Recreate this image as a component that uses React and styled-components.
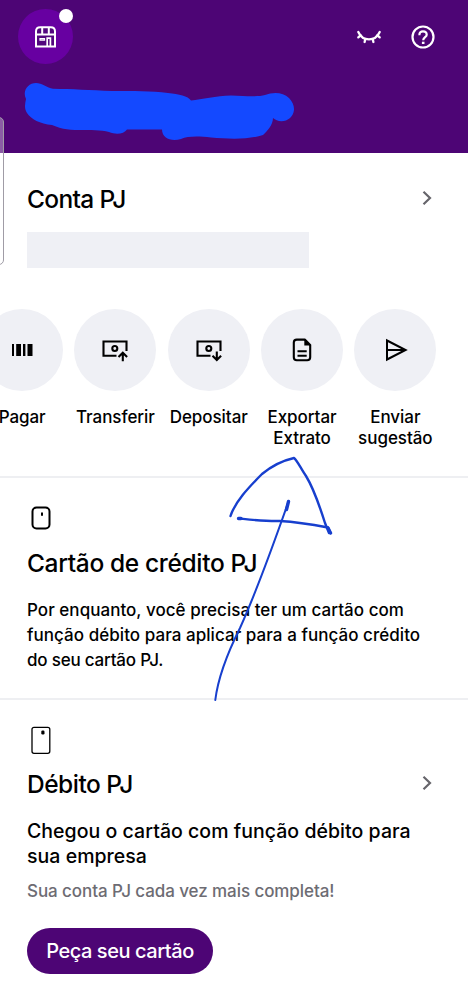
import React from 'react';
//STYLING
import styled, { createGlobalStyle } from 'styled-components';

const actions = [
  { id: 'pagar', lines: ['Pagar'], icon: BarcodeIcon },
  { id: 'transferir', lines: ['Transferir'], icon: TransferIcon },
  { id: 'depositar', lines: ['Depositar'], icon: DepositIcon },
  { id: 'extrato', lines: ['Exportar', 'Extrato'], icon: FileIcon },
  { id: 'sugestao', lines: ['Enviar', 'sugestão'], icon: SendIcon },
];

//ICONS
function StoreIcon() {
  return (
    <svg width="21" height="22" viewBox="0 0 21 22" fill="none" stroke="#fff" strokeWidth="2">
      <path d="M1 20.6V5.5Q1 1.2 5.3 1.2H15.7Q20 1.2 20 5.5V20.6Z" fill="#52067e" />
      <path d="M1 8.600H20M7.2 1.5V8.5M13.8 1.5V8.5" />
      <path d="M12.2 20.5V12.2H15.400V20.5" strokeWidth="1.7" />
      <path d="M5 12.600H9.500V14.200H5Z" strokeWidth="1.2" />
    </svg>
  );
}

function ClosedEyeIcon() {
  return (
    <svg width="26" height="14" viewBox="0 0 26 14" fill="none" stroke="#fff" strokeWidth="2.3" strokeLinecap="round">
      <path d="M2.3 2C4.5 6.8 8.2 9.4 13 9.4S21.5 6.8 23.7 2" />
      <path d="M4.6 5.3L2.3 7.4M21.4 5.3L23.7 7.4M9.3 9L8.6 12M16.7 9L17.4 12" />
    </svg>
  );
}

function HelpIcon() {
  return (
    <svg width="24" height="24" viewBox="0 0 24 24" fill="none" stroke="#fff" strokeWidth="2.2">
      <circle cx="12" cy="12" r="10.5" />
      <path d="M8.4 10.2C8.3 7.7 9.8 6.3 12 6.3S15.7 7.7 15.7 9.7C15.7 12.1 12.2 12.3 12.2 15.2" />
      <path d="M12.2 16.7V19" strokeWidth="2.6" />
    </svg>
  );
}

function ChevronIcon() {
  return (
    <svg width="10" height="16" viewBox="0 0 10 16" fill="none" stroke="#66656b" strokeWidth="2.2">
      <path d="M1.5 1.7L8 8L1.5 14.3" />
    </svg>
  );
}

function BarcodeIcon() {
  return (
    <svg width="22" height="12" viewBox="0 0 22 12" fill="#000">
      <path d="M1 0H3V12H1ZM5.2 0H10V12H5.2ZM12 0H14.4V12H12ZM16.5 0H21.5V12H16.5Z" />
    </svg>
  );
}

function TransferIcon() {
  return (
    <svg width="26" height="22" viewBox="0 -1 26 22" overflow="visible" fill="none" stroke="#000" strokeWidth="2.1">
      <path d="M14.5 15.7H1.5V1.5H24.5V11" />
      <circle cx="12.8" cy="8.5" r="2.5" />
      <path d="M20.8 21.3V13.5M16.5 17L20.8 12.7L25.1 17" />
    </svg>
  );
}

function DepositIcon() {
  return (
    <svg width="26" height="22" viewBox="0 -1 26 22" overflow="visible" fill="none" stroke="#000" strokeWidth="2.1">
      <path d="M14.5 15.7H1.5V1.5H24.5V11" />
      <circle cx="12.8" cy="8.5" r="2.5" />
      <path d="M20.8 11.5V20M16.5 15.8L20.8 20.1L25.1 15.8" />
    </svg>
  );
}

function FileIcon() {
  return (
    <svg width="20" height="24" viewBox="0 0 20 24" fill="none" stroke="#000" strokeWidth="2.1">
      <path d="M12.8 1.6H4.8Q1.8 1.6 1.8 4.6V19.2Q1.8 22.2 4.8 22.2H15.2Q18.2 22.2 18.2 19.2V7Z" strokeLinejoin="round" />
      <path d="M12.3 1.5V7.5H18.5Z" fill="#000" stroke="none" />
      <path d="M5.5 13.3H14.7M5.5 17.7H14.7" />
    </svg>
  );
}

function SendIcon() {
  return (
    <svg width="26" height="24" viewBox="0 0 26 24" fill="none" stroke="#000" strokeWidth="2">
      <path d="M5 2.5V21.5L23.6 12Z" />
      <path d="M5 12H23" />
    </svg>
  );
}

function CreditIcon() {
  return (
    <svg width="26" height="24" viewBox="0 0 26 24" fill="none" stroke="#000" strokeWidth="2">
      <rect x="5.5" y="1.5" width="17" height="21" rx="4" />
      <path d="M15 6.5V9.7" />
    </svg>
  );
}

function DebitIcon() {
  return (
    <svg width="26" height="28" viewBox="0 0 26 28" fill="none" stroke="#000" strokeWidth="1.3">
      <rect x="5" y="1.3" width="17.8" height="26" rx="2" />
      <rect x="14.3" y="4.5" width="3.2" height="4" rx="1.2" fill="#000" stroke="none" />
    </svg>
  );
}

//HAND DRAWN MARKS
function Marks() {
  return (
    <Drawing width="468" height="720" viewBox="0 0 468 720" fill="none">
      <path
        fill="#1449ff"
        d="M36 83C42 83 47 88 53 88.7C72 89 90 90 112 91C134 91 151 91 168 93C179 94 188 96 191 100.5C202 99 216 96 231 95.5C246 96 258 97 265 95C273 92 283 92 289 98C297 106 295 117 286 120.5C281 122 276 121 273 118C273 125 267 131 263 135C248 140 228 139 211 137.5C198 136 188 136 181 139C171 142 162 138 162 129.5H127C124 134 116 135 109 132C101 130 90 130 80 130C66 130 59 128 52 125C40 124 31 119 27 113C24 108 25 104 26 99C22 91 28 83 36 83Z"
      />
      <g stroke="#173fce" strokeLinecap="round" strokeLinejoin="round">
        <path strokeWidth="2.4" d="M230.5 516C235 502 248 488 262 474C273 465 285 460 294 458C297 460 301 469 306 476C314 489 319 504 325 523L329 533" />
        <path strokeWidth="2.4" d="M239 518.5C254 520 267 521.5 280 521C299 522 315 525 328 527.5L330.5 533" />
        <path strokeWidth="2" d="M288 503C275 540 258 588 240 628C229 650 218 678 215.3 700" />
        <path strokeWidth="3.4" d="M288.5 501.5L286.5 509.5M238.5 518.5H241M328 528L330.5 533" />
      </g>
    </Drawing>
  );
}

function App() {
  return (
    <Screen>
      <GlobalStyle />
      <Header>
        <Avatar>
          <StoreIcon />
          <Badge />
        </Avatar>
        <HeaderIcons>
          <ClosedEyeIcon />
          <HelpIcon />
        </HeaderIcons>
      </Header>

      <Account>
        <TitleRow>
          <Title $spacing="-0.65px">Conta PJ</Title>
          <ChevronIcon />
        </TitleRow>
        <HiddenBalance />
        <Actions>
          {actions.map(({ id, lines, icon: Icon }) => (
            <Action key={id}>
              <Circle><Icon /></Circle>
              <ActionLabel>
                {lines.map((line) => <span key={line}>{line}</span>)}
              </ActionLabel>
            </Action>
          ))}
        </Actions>
      </Account>

      <Credit>
        <CreditIcon />
        <TitleRow>
          <Title $spacing="-0.35px">Cartão de crédito PJ</Title>
        </TitleRow>
        <Text>
          <Line $spacing="0.04px">Por enquanto, você precisa ter um cartão com</Line>
          <Line $spacing="0.05px">função débito para aplicar para a função crédito</Line>
          <Line $spacing="-0.2px">do seu cartão PJ.</Line>
        </Text>
      </Credit>

      <Debit>
        <DebitIcon />
        <TitleRow>
          <Title $spacing="-0.5px">Débito PJ</Title>
          <ChevronIcon />
        </TitleRow>
        <Lead>
          Chegou o cartão com função débito para<br />
          sua empresa
        </Lead>
        <Note>Sua conta PJ cada vez mais completa!</Note>
        <Button>Peça seu cartão</Button>
      </Debit>

      <EdgeHandle />
      <Marks />
    </Screen>
  );
}

const GlobalStyle = createGlobalStyle`
  * {
    box-sizing: border-box;
  }
  body {
    margin: 0;
    background: #fff;
    font-family: Inter, "Liberation Sans", sans-serif;
  }
  svg {
    display: block;
    flex-shrink: 0;
  }
`

const Screen = styled.div`
  position: relative;
  width: 468px;
  height: 998px;
  overflow: hidden;
  color: #000;
`

const Header = styled.header`
  display: flex;
  justify-content: space-between;
  align-items: flex-start;
  height: 153px;
  padding: 9px 33px 0 18px;
  background: #4d0575;
`

const Avatar = styled.div`
  position: relative;
  display: flex;
  align-items: center;
  justify-content: center;
  width: 55px;
  height: 55px;
  border-radius: 50%;
  background: #6700a1;
`

const Badge = styled.span`
  position: absolute;
  top: 0;
  right: 0;
  width: 14px;
  height: 14px;
  border-radius: 50%;
  background: #fff;
`

const HeaderIcons = styled.div`
  display: flex;
  align-items: center;
  gap: 29px;
  height: 55px;
`

const TitleRow = styled.div`
  display: flex;
  align-items: center;
  justify-content: space-between;

  svg {
    margin-bottom: 3px;
  }
`

const Section = styled.section`
  border-bottom: 2px solid #eeeff2;
`

const Account = styled(Section)`
  height: 325px;
  padding: 30px 36px 0 27px;
`

const Credit = styled(Section)`
  height: 222px;
  padding: 28px 27px 0;

  ${TitleRow} {
    margin-top: 17px;
  }
`

const Debit = styled.section`
  padding: 26px 36px 0 27px;

  ${TitleRow} {
    margin-top: 14px;
  }
`

const Title = styled.h2`
  margin: 0;
  font-size: 24.5px;
  font-weight: 500;
  line-height: 32px;
  letter-spacing: ${({ $spacing }) => $spacing};
  white-space: nowrap;
`

const HiddenBalance = styled.div`
  width: 282px;
  height: 36px;
  margin-top: 17px;
  background: #eff0f5;
`

const Actions = styled.div`
  display: flex;
  width: 467px;
  margin: 41px 0 0 -51.5px;
`

const Action = styled.div`
  display: flex;
  flex: 0 0 93.3px;
  flex-direction: column;
  align-items: center;
`

const Circle = styled.div`
  display: flex;
  align-items: center;
  justify-content: center;
  width: 82px;
  height: 82px;
  border-radius: 50%;
  background: #eff0f5;
`

const ActionLabel = styled.div`
  display: flex;
  flex-direction: column;
  align-items: center;
  margin-top: 16px;
  font-size: 17px;
  font-weight: 500;
  line-height: 21px;
  letter-spacing: -0.05px;
`

const Text = styled.p`
  margin: 19px 0 0;
  font-size: 17px;
  font-weight: 500;
  line-height: 25px;
  white-space: nowrap;
`

const Line = styled.span`
  display: block;
  letter-spacing: ${({ $spacing }) => $spacing};
`

const Lead = styled.p`
  margin: 19px 0 0;
  font-size: 19.5px;
  font-weight: 500;
  line-height: 25px;
  letter-spacing: 0.04px;
  white-space: nowrap;
`

const Note = styled.p`
  margin: 11px 0 0;
  color: #6d6c73;
  font-size: 17px;
  font-weight: 500;
  line-height: 22px;
  letter-spacing: -0.08px;
`

const Button = styled.button`
  width: 186px;
  height: 46px;
  margin-top: 26px;
  padding: 0;
  border: 0;
  border-radius: 23px;
  background: #4d0575;
  color: #fff;
  font-family: inherit;
  font-size: 20px;
  font-weight: 500;
  letter-spacing: -0.45px;
`

const EdgeHandle = styled.div`
  position: absolute;
  top: 117px;
  left: -8px;
  width: 12px;
  height: 148px;
  border: 1px solid #a09ca6;
  border-radius: 5px;
  background: rgba(255, 255, 255, 0.35);
`

const Drawing = styled.svg`
  position: absolute;
  top: 0;
  left: 0;
  pointer-events: none;
`

export default App;
